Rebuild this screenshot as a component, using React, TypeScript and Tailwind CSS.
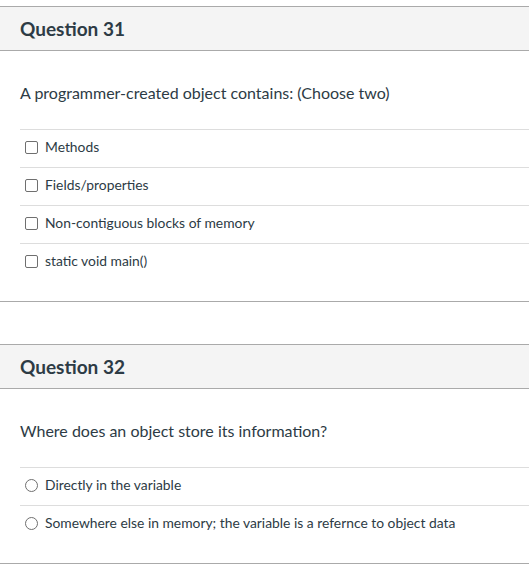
const questions = [
  {
    title: "Question 31",
    text: "A programmer-created object contains: (Choose two)",
    kind: "checkbox",
    answers: [
      "Methods",
      "Fields/properties",
      "Non-contiguous blocks of memory",
      "static void main()",
    ],
  },
  {
    title: "Question 32",
    text: "Where does an object store its information?",
    kind: "radio",
    answers: [
      "Directly in the variable",
      "Somewhere else in memory; the variable is a refernce to object data",
    ],
  },
];

const Marker = ({ kind }: { kind: string }) =>
  kind === "checkbox" ? (
    <span className="block w-[13px] h-[13px] shrink-0 rounded-[2px] border border-[#6f6f6f] bg-white" />
  ) : (
    <span className="block w-[13px] h-[13px] shrink-0 rounded-full border border-[#6f6f6f] bg-white" />
  );

export default function App() {
  return (
    <div className="min-h-[583px] bg-white pt-[6px] font-['Lato','Liberation_Sans',sans-serif] text-[#2d3b45]">
      {questions.map((q, i) => (
        <div
          key={q.title}
          className={`border-y border-[#aaaaaa] pb-5 ${i > 0 ? "mt-[42px]" : ""}`}
        >
          {/* cabecera */}
          <div className="h-[44px] flex items-center px-5 bg-[#f4f4f4] border-b border-[#aaaaaa]">
            <h2 className="text-[19px] font-bold leading-none">{q.title}</h2>
          </div>

          <div className="pt-[30px] px-5 text-[16px] leading-[24px]">{q.text}</div>

          <div className="mt-[24px] ml-5">
            {q.answers.map((a) => (
              <div
                key={a}
                className="h-[38px] border-t border-[#dddddd] flex items-center gap-[7px] pl-[5px] pb-[2px] text-[13.85px]"
              >
                <Marker kind={q.kind} />
                <span>{a}</span>
              </div>
            ))}
          </div>
        </div>
      ))}
    </div>
  );
}
